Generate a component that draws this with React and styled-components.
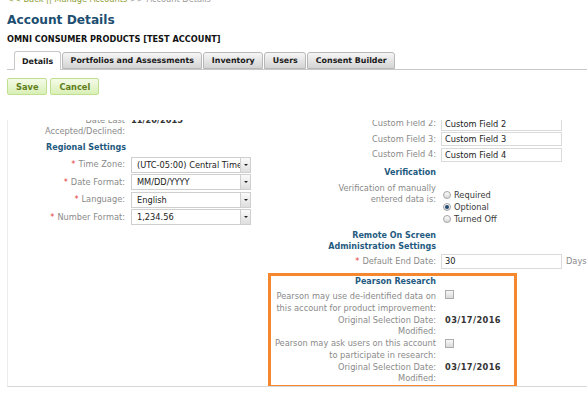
import React from "react"
import styled, { createGlobalStyle } from "styled-components"

const GlobalStyle = createGlobalStyle`
  html, body {
    margin: 0;
    padding: 0;
    background: #fff;
    overflow: hidden;
  }
  body {
    font-family: "DejaVu Sans", Verdana, sans-serif;
    font-size: 8.25px;
    color: #333;
  }
`

const Page = styled.div`
  padding-left: 7px;
  width: 580px;
`

const Breadcrumb = styled.div`
  margin-top: -6px;
  height: 10px;
  line-height: 10px;
  font-size: 8.25px;
  color: #9b9b9b;
  white-space: nowrap;
  a {
    color: #909d35;
    text-decoration: none;
  }
`

const Title = styled.h1`
  margin: 9px 0 0;
  font-size: 12.2px;
  line-height: 14px;
  font-weight: bold;
  color: #1d4e70;
`

const Company = styled.div`
  margin-top: 7px;
  font-size: 8.2px;
  line-height: 10px;
  font-weight: bold;
  color: #111;
`

const TabBar = styled.div`
  display: flex;
  align-items: flex-end;
  gap: 1px;
  margin-top: 7px;
  padding-left: 7px;
  height: 18px;
  border-bottom: 1px solid #c8c8c8;
`

const Tab = styled.div`
  box-sizing: border-box;
  display: flex;
  align-items: center;
  height: ${p => (p.$active ? "19px" : "17px")};
  margin-bottom: ${p => (p.$active ? "-1px" : "0")};
  padding: 0 ${p => (p.$active ? "7px" : "7.5px")};
  border: 1px solid ${p => (p.$active ? "#c8c8c8" : "#b8b8b8")};
  border-bottom: ${p => (p.$active ? "none" : "1px solid #b8b8b8")};
  border-radius: 3px 3px 0 0;
  background: ${p =>
    p.$active ? "#fff" : "linear-gradient(#f6f6f6, #d4d4d4)"};
  font-size: 7.9px;
  font-weight: bold;
  color: #1a1a1a;
  white-space: nowrap;
`

const ButtonRow = styled.div`
  display: flex;
  gap: 3px;
  margin-top: 8px;
`

const Button = styled.button`
  height: 17px;
  padding: 0 8px;
  border: 1px solid #bfe08f;
  border-radius: 2px;
  background: linear-gradient(#f5fbe9, #d9efb6);
  color: #5f7d1d;
  font-family: "DejaVu Sans", Verdana, sans-serif;
  font-size: 8.25px;
  font-weight: bold;
  cursor: pointer;
`

const Panel = styled.div`
  margin-top: 25px;
  height: 266px;
  border-left: 1px solid #ececec;
  border-bottom: 1px solid #d8d8d8;
  overflow: hidden;
`

const Content = styled.div`
  display: flex;
  align-items: flex-start;
  margin-top: -6px;
`

const Column = styled.div`
  flex: 0 0 ${p => p.$width}px;
  display: flex;
  flex-direction: column;
`

const Row = styled.div`
  display: grid;
  grid-template-columns: ${p => p.$label}px auto;
  column-gap: ${p => p.$gap || 5}px;
  align-items: ${p => (p.$top ? "start" : "center")};
  margin-top: ${p => p.$mt || 0}px;
  line-height: ${p => p.$lh || 10.5}px;
`

const Label = styled.div`
  text-align: right;
  color: #8a8a8a;
  white-space: nowrap;
`

const Req = styled.span`
  color: #e2403c;
  margin-right: 3px;
`

const Heading = styled.div`
  width: ${p => p.$width}px;
  margin-top: ${p => p.$mt || 0}px;
  text-align: right;
  font-size: 8px;
  line-height: 10.5px;
  font-weight: bold;
  color: #1f5a80;
`

const Value = styled.div`
  padding-left: ${p => p.$pad || 0}px;
  font-weight: bold;
  color: #333;
  letter-spacing: ${p => (p.$wide ? "0.4px" : "0")};
`

const SelectBox = styled.div`
  box-sizing: border-box;
  display: flex;
  width: 120px;
  height: 16px;
  border: 1px solid #cfcfcf;
  background: #fff;
`

const SelectText = styled.div`
  flex: 1;
  overflow: hidden;
  white-space: nowrap;
  padding-left: 5px;
  line-height: 14px;
  color: #222;
`

const SelectArrow = styled.div`
  flex: 0 0 9px;
  display: flex;
  align-items: center;
  justify-content: center;
  border-left: 1px solid #cfcfcf;
  background: linear-gradient(#fafafa, #dedede);
  &::after {
    content: "";
    border-left: 2px solid transparent;
    border-right: 2px solid transparent;
    border-top: 2.5px solid #222;
  }
`

const SelectList = styled.div`
  display: flex;
  flex-direction: column;
  gap: 1.5px;
  margin-top: 3.5px;
`

const TextBox = styled.div`
  box-sizing: border-box;
  width: 121px;
  height: ${p => p.$h || 14}px;
  padding-left: 3px;
  border: 1px solid #dadada;
  line-height: ${p => (p.$h || 14) - 2}px;
  color: #222;
  white-space: nowrap;
`

const FieldWithUnit = styled.div`
  display: flex;
  align-items: center;
  gap: 4px;
  color: #8a8a8a;
`

const RadioGroup = styled.div`
  display: flex;
  flex-direction: column;
  padding-top: 6.2px;
  padding-left: 2px;
`

const RadioRow = styled.div`
  display: flex;
  align-items: center;
  gap: 3px;
  height: 12px;
  color: #3a3a3a;
`

const Radio = styled.span`
  box-sizing: border-box;
  display: inline-flex;
  align-items: center;
  justify-content: center;
  width: 8px;
  height: 8px;
  border: 1px solid #a5a5a5;
  border-radius: 50%;
  background: linear-gradient(#fdfdfd, #d8d8d8);
  &::after {
    content: "";
    display: ${p => (p.$checked ? "block" : "none")};
    width: 4px;
    height: 4px;
    border-radius: 50%;
    background: #22486e;
  }
`

const Check = styled.span`
  box-sizing: border-box;
  display: block;
  width: 9px;
  height: 9px;
  margin: ${p => p.$mt || 0}px 0 0 4px;
  border: 1px solid #acacac;
  background: linear-gradient(#f8f8f8, #dadada);
`

const ResearchBox = styled.div`
  width: 249px;
  box-sizing: border-box;
  margin-top: 4px;
  padding-top: 1.3px;
  border: 3px solid #f5872f;
`

const LEFT_LABEL = 117
const RIGHT_LABEL = 168
const BOX_LABEL = 165

const regional = [
  { label: "Time Zone:", value: "(UTC-05:00) Central Time (US & Canada)" },
  { label: "Date Format:", value: "MM/DD/YYYY" },
  { label: "Language:", value: "English" },
  { label: "Number Format:", value: "1,234.56" },
]

const customFields = ["Custom Field 2", "Custom Field 3", "Custom Field 4"]

const verification = [
  { label: "Required", checked: false },
  { label: "Optional", checked: true },
  { label: "Turned Off", checked: false },
]

const research = [
  {
    question: ["Pearson may use de-identified data on", "this account for product improvement:"],
    date: "03/17/2016",
    checkTop: -1,
  },
  {
    question: ["Pearson may ask users on this account", "to participate in research:"],
    date: "03/17/2016",
    checkTop: 1,
  },
]

const Select = ({ value }) => (
  <SelectBox>
    <SelectText>{value}</SelectText>
    <SelectArrow />
  </SelectBox>
)

const App = () => {
  return (
    <Page>
      <GlobalStyle />
      <Breadcrumb>
        <a href="#back">&lt;&lt; Back</a> <a href="#sep">||</a>{" "}
        <a href="#manage">Manage Accounts</a> &gt;&gt; Account Details
      </Breadcrumb>
      <Title>Account Details</Title>
      <Company>OMNI CONSUMER PRODUCTS [TEST ACCOUNT]</Company>

      <TabBar>
        <Tab $active>Details</Tab>
        <Tab>Portfolios and Assessments</Tab>
        <Tab>Inventory</Tab>
        <Tab>Users</Tab>
        <Tab>Consent Builder</Tab>
      </TabBar>

      <ButtonRow>
        <Button>Save</Button>
        <Button>Cancel</Button>
      </ButtonRow>

      <Panel>
        <Content>
          <Column $width={260}>
            <Row $label={LEFT_LABEL} $gap={6} $top $mt={1}>
              <Label>
                Date Last
                <br />
                Accepted/Declined:
              </Label>
              <Value>11/20/2015</Value>
            </Row>
            <Heading $width={LEFT_LABEL + 1} $mt={6.5}>
              Regional Settings
            </Heading>
            <SelectList>
              {regional.map(item => (
                <Row key={item.label} $label={LEFT_LABEL} $gap={6}>
                  <Label>
                    <Req>*</Req>
                    {item.label}
                  </Label>
                  <Select value={item.value} />
                </Row>
              ))}
            </SelectList>
          </Column>

          <Column $width={320}>
            {customFields.map((name, i) => (
              <Row key={name} $label={RIGHT_LABEL} $mt={i === 0 ? 2.5 : 1.5}>
                <Label>{name}:</Label>
                <TextBox>{name}</TextBox>
              </Row>
            ))}

            <Heading $width={RIGHT_LABEL} $mt={6.8}>
              Verification
            </Heading>
            <Row $label={RIGHT_LABEL} $top $mt={4.5}>
              <Label>
                Verification of manually
                <br />
                entered data is:
              </Label>
              <RadioGroup>
                {verification.map(opt => (
                  <RadioRow key={opt.label}>
                    <Radio $checked={opt.checked} />
                    {opt.label}
                  </RadioRow>
                ))}
              </RadioGroup>
            </Row>

            <Heading $width={RIGHT_LABEL} $mt={5.8}>
              Remote On Screen
              <br />
              Administration Settings
            </Heading>
            <Row $label={RIGHT_LABEL} $mt={1.7}>
              <Label>
                <Req>*</Req>Default End Date:
              </Label>
              <FieldWithUnit>
                <TextBox $h={15}>30</TextBox>
                Days
              </FieldWithUnit>
            </Row>

            <ResearchBox>
              <Heading $width={BOX_LABEL}>Pearson Research</Heading>
              {research.map((item, i) => (
                <React.Fragment key={i}>
                  <Row $label={BOX_LABEL} $top $lh={11.7} $mt={i === 0 ? 3.6 : 0}>
                    <Label>
                      {item.question[0]}
                      <br />
                      {item.question[1]}
                    </Label>
                    <Check $mt={item.checkTop} />
                  </Row>
                  <Row $label={BOX_LABEL} $top $lh={11.7}>
                    <Label>Original Selection Date:</Label>
                    <Value $pad={4} $wide>
                      {item.date}
                    </Value>
                  </Row>
                  <Row $label={BOX_LABEL} $top $lh={11.7}>
                    <Label>Modified:</Label>
                    <span />
                  </Row>
                </React.Fragment>
              ))}
            </ResearchBox>
          </Column>
        </Content>
      </Panel>
    </Page>
  )
}

export default App
